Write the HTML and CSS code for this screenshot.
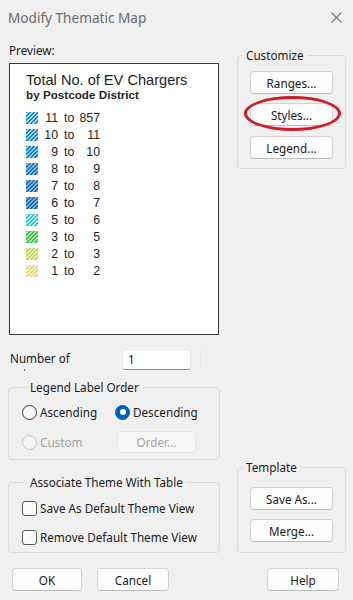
FILE: index.html
```html
<!DOCTYPE html>
<html>
<head>
<meta charset="utf-8">
<link rel="stylesheet" href="styles.css">
</head>
<body>
<div class="dialog">
  <div class="titlebar">
    <span class="title">Modify Thematic Map</span>
    <svg class="close" viewBox="0 0 11 11" width="11" height="11"><path d="M0.5 0.5 L10.5 10.5 M10.5 0.5 L0.5 10.5" stroke="#777" stroke-width="1.1" fill="none"/></svg>
  </div>
  <div class="content">
    <div class="cols">
      <div class="left">
        <div class="preview-label">Preview:</div>
        <div class="preview">
          <div class="map-title">Total No. of EV Chargers</div>
          <div class="map-sub">by Postcode District</div>
          <div class="ranges">
            <div class="range"><span class="swatch s1"></span><span class="n1">11</span><span class="to">to</span><span class="n2">857</span></div>
            <div class="range"><span class="swatch s2"></span><span class="n1">10</span><span class="to">to</span><span class="n2">11</span></div>
            <div class="range"><span class="swatch s3"></span><span class="n1">9</span><span class="to">to</span><span class="n2">10</span></div>
            <div class="range"><span class="swatch s4"></span><span class="n1">8</span><span class="to">to</span><span class="n2">9</span></div>
            <div class="range"><span class="swatch s5"></span><span class="n1">7</span><span class="to">to</span><span class="n2">8</span></div>
            <div class="range"><span class="swatch s6"></span><span class="n1">6</span><span class="to">to</span><span class="n2">7</span></div>
            <div class="range"><span class="swatch s7"></span><span class="n1">5</span><span class="to">to</span><span class="n2">6</span></div>
            <div class="range"><span class="swatch s8"></span><span class="n1">3</span><span class="to">to</span><span class="n2">5</span></div>
            <div class="range"><span class="swatch s9"></span><span class="n1">2</span><span class="to">to</span><span class="n2">3</span></div>
            <div class="range"><span class="swatch s10"></span><span class="n1">1</span><span class="to">to</span><span class="n2">2</span></div>
          </div>
        </div>
        <div class="numrow">
          <div class="num-label">Number of<span class="num-dot"></span></div>
          <div class="num-input">1</div>
          <div class="num-sep"></div>
        </div>
        <div class="group order-group">
          <div class="group-title">Legend Label Order</div>
          <div class="radio-row first">
            <div class="opt w"><span class="radio"></span><span>Ascending</span></div>
            <div class="opt"><span class="radio on"></span><span>Descending</span></div>
          </div>
          <div class="radio-row second">
            <div class="opt w disabled"><span class="radio off"></span><span>Custom</span></div>
            <div class="btn btn-order disabled">Order...</div>
          </div>
        </div>
        <div class="group assoc-group">
          <div class="group-title">Associate Theme With Table</div>
          <div class="check-row first"><span class="check"></span><span>Save As Default Theme View</span></div>
          <div class="check-row second"><span class="check"></span><span>Remove Default Theme View</span></div>
        </div>
      </div>
      <div class="right">
        <div class="group customize">
          <div class="group-title">Customize</div>
          <div class="btn side-btn b-ranges">Ranges...</div>
          <div class="styles-wrap">
            <div class="btn side-btn b-styles">Styles...</div>
            <div class="ellipse"></div>
          </div>
          <div class="btn side-btn b-legend">Legend...</div>
        </div>
        <div class="group template">
          <div class="group-title">Template</div>
          <div class="btn side-btn b-save">Save As...</div>
          <div class="btn side-btn b-merge">Merge...</div>
        </div>
      </div>
    </div>
    <div class="footer">
      <div class="btn b-ok">OK</div>
      <div class="btn b-cancel">Cancel</div>
      <div class="btn b-help">Help</div>
    </div>
  </div>
</div>
</body>
</html>
```

FILE: styles.css
```css
* { box-sizing: border-box; }
html, body { margin: 0; padding: 0; }
body {
  background: #f0f0f0;
  font-family: "Noto Sans", sans-serif;
  font-size: 11.7px;
  color: #1b1b1b;
  width: 353px;
  height: 600px;
  overflow: hidden;
}
.dialog { width: 353px; height: 600px; display: flex; flex-direction: column; }
.titlebar {
  height: 42px;
  display: flex;
  justify-content: space-between;
  align-items: flex-start;
  padding: 8px 11px 0 8px;
}
.title { font-size: 13.6px; line-height: 20px; color: #6b6b6b; }
.close { margin-top: 4px; }
.content { flex: 1; padding: 0 7px 0 8px; display: flex; flex-direction: column; }
.cols { display: flex; gap: 17px; }
.left { width: 212px; display: flex; flex-direction: column; }
.right { width: 109px; display: flex; flex-direction: column; justify-content: space-between; padding-top: 13px; }

.preview-label { line-height: 16px; padding-left: 1px; }
.preview {
  margin: 5px 1px 0 1px;
  height: 272px;
  background: #fff;
  border: 1px solid #3a3a3a;
  padding: 7.5px 0 0 16px;
  font-family: "Liberation Sans", Arial, sans-serif;
  color: #222;
}
.map-title { font-size: 14.6px; line-height: 16px; }
.map-sub { font-size: 11.7px; font-weight: bold; line-height: 13px; color: #262626; }
.ranges { margin-top: 9px; }
.range {
  display: grid;
  grid-template-columns: 12px 20px 17px 25px;
  height: 17px;
  align-items: center;
  font-size: 12.3px;
  line-height: 17px;
}
.swatch { width: 12px; height: 12px; }
.n1, .n2 { text-align: right; }
.to { padding-left: 6px; }

.s1 { background: repeating-linear-gradient(135deg, #1f86c6 0 1.3px, #a6def5 1.3px 2.8px); }
.s2 { background: repeating-linear-gradient(135deg, #1c80c2 0 1.3px, #98d6f1 1.3px 2.8px); }
.s3 { background: repeating-linear-gradient(135deg, #1a78bc 0 1.3px, #8ccdee 1.3px 2.8px); }
.s4 { background: repeating-linear-gradient(135deg, #1d72b6 0 1.4px, #7fbfe6 1.4px 2.8px); }
.s5 { background: repeating-linear-gradient(135deg, #1f6db2 0 1.4px, #78b8e2 1.4px 2.8px); }
.s6 { background: repeating-linear-gradient(135deg, #206aae 0 1.4px, #72b2de 1.4px 2.8px); }
.s7 { background: repeating-linear-gradient(135deg, #35c4cf 0 1.3px, #b0eff2 1.3px 2.8px); }
.s8 { background: repeating-linear-gradient(135deg, #46bb52 0 1.3px, #ade6a8 1.3px 2.8px); }
.s9 { background: repeating-linear-gradient(135deg, #b6d85c 0 1.3px, #e6f3b4 1.3px 2.8px); }
.s10 { background: repeating-linear-gradient(135deg, #f0d27c 0 1.3px, #faefc8 1.3px 2.8px); }

.group { border: 1px solid #dcdcdc; border-radius: 4px; }
.group-title {
  width: fit-content;
  margin: -9px 0 0 5px;
  padding: 0 3px;
  line-height: 16px;
  background: #f0f0f0;
}

.numrow { margin-top: 14px; display: flex; align-items: flex-start; height: 21px; }
.num-label { width: 114px; padding-left: 2px; margin-top: 1px; line-height: 16px; }
.num-dot { display: block; width: 1px; height: 2px; background: #777; margin: 3px 0 0 14px; }
.num-input {
  width: 69px;
  height: 21px;
  background: #fff;
  border: 1px solid #e6e6e6;
  border-bottom-color: #8c8c8c;
  border-radius: 3px;
  padding-left: 5px;
  line-height: 19px;
}
.num-sep { width: 1px; height: 21px; background: #e6e6e6; margin-left: 9px; }

.order-group { margin-top: 17px; height: 73px; padding-left: 13px; }
.radio-row { display: flex; align-items: center; height: 22px; }
.radio-row.first { margin-top: 6px; }
.radio-row.second { margin-top: 8px; }
.opt { display: flex; align-items: center; gap: 3px; }
.opt.w { width: 93px; }
.radio { width: 15px; height: 15px; border-radius: 50%; border: 1px solid #3c3c3c; background: #f8f8f8; }
.radio.on {
  background: #005fb8;
  border-color: #005fb8;
  display: flex;
  align-items: center;
  justify-content: center;
}
.radio.on::after { content: ""; width: 6px; height: 6px; border-radius: 50%; background: #fff; }
.radio.off { border-color: #c8c8c8; background: #f4f4f4; }
.disabled { color: #a3a3a3; }

.assoc-group { margin-top: 22px; height: 71px; padding-left: 13px; }
.check-row { display: flex; align-items: center; gap: 3px; height: 22px; }
.check-row.first { margin-top: 7px; }
.check-row.second { margin-top: 7px; }
.check { width: 15px; height: 15px; border: 1px solid #5a5a5a; border-radius: 3px; background: #fbfbfb; }

.btn {
  height: 23px;
  background: #fdfdfd;
  border: 1px solid #d3d3d3;
  border-bottom-color: #bcbcbc;
  border-radius: 4px;
  display: flex;
  align-items: center;
  justify-content: center;
  color: #1b1b1b;
}
.btn.disabled { background: #f6f6f6; border-color: #e6e6e6; color: #a3a3a3; }
.btn-order { width: 79px; height: 22px; margin-left: 2px; }

.customize { height: 114px; }
.template { height: 86px; }
.side-btn { width: 83px; margin-left: 12px; }
.b-ranges { margin-top: 8px; }
.styles-wrap { position: relative; margin-top: 9px; }
.b-legend { margin-top: 10px; }
.b-save { margin-top: 12px; }
.b-merge { margin-top: 9px; }
.ellipse {
  position: absolute;
  left: 6px;
  top: -7px;
  width: 97px;
  height: 35px;
  border: 3px solid #cc1f2c;
  border-radius: 50%;
}

.footer { margin-top: 15px; display: flex; gap: 15px; padding: 0 7px 0 4px; }
.b-ok { width: 70px; }
.b-cancel { width: 72px; }
.b-help { width: 72px; margin-left: auto; }
```
